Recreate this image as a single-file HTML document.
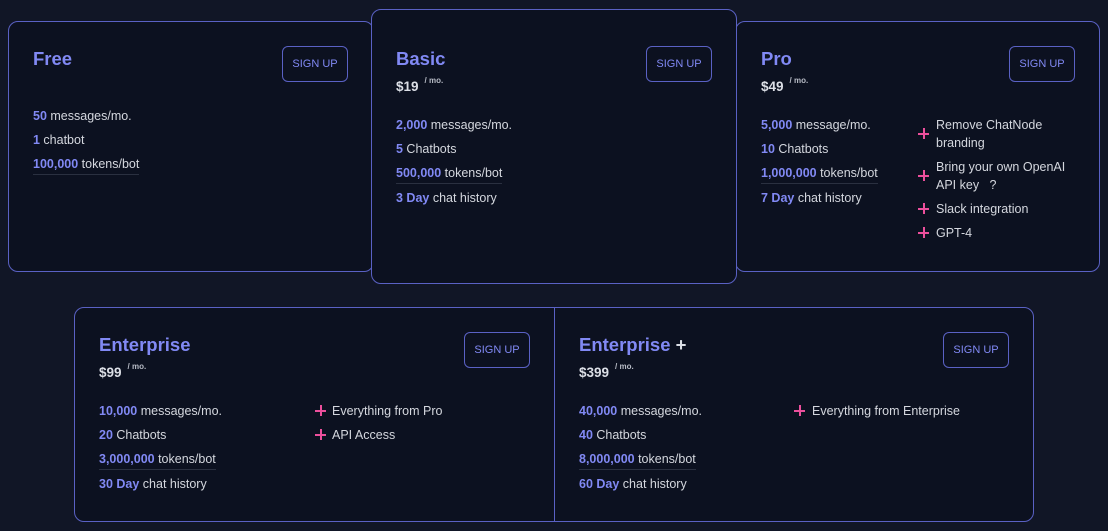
<!DOCTYPE html><html><head><style>
body{margin:0;width:1108px;height:531px;background:#111626;font-family:"Liberation Sans",sans-serif;position:relative;overflow:hidden;color:#d4d7de}
.c{position:absolute;background:#0c1120;border:1px solid #5a61c4;border-radius:10px;box-sizing:border-box}
.a{position:absolute;white-space:nowrap}
.t{font-size:18.5px;font-weight:bold;color:#8189f4;line-height:22px}
.p{font-size:13.5px;font-weight:bold;color:#dcdfe6;line-height:18px}
.p small{font-size:8px;font-weight:bold;color:#b8bcc6;vertical-align:8px;margin-left:6px}
.b{position:absolute;width:66px;height:36px;border:1px solid #5a61c4;border-radius:6px;color:#8189f4;font-size:11px;display:flex;align-items:center;justify-content:center;box-sizing:border-box}
.l{font-size:12.5px;line-height:18px}
.l b{color:#8189f4}
.u{border-bottom:1px solid #2a3040;padding-bottom:1px}
.pl{position:absolute;width:11px;height:11px;margin-top:3px}
.pl:before{content:"";position:absolute;left:0;top:5px;width:11px;height:2px;background:#ec4f9c}
.pl:after{content:"";position:absolute;left:5px;top:0;width:2px;height:11px;background:#ec4f9c}
</style></head><body>
<div class="c" style="left:8px;top:21px;width:366px;height:251px"></div>
<div class="c" style="left:735px;top:21px;width:365px;height:251px"></div>
<div class="c" style="left:371px;top:9px;width:366px;height:275px"></div>
<div class="c" style="left:74px;top:307px;width:960px;height:215px"></div>
<div style="position:absolute;left:554px;top:308px;width:1px;height:213px;background:#5a61c4"></div>

<div class="a t" style="left:33px;top:48px">Free</div>
<div class="b" style="left:282px;top:46px">SIGN UP</div>
<div class="a l" style="left:33px;top:107px"><b>50</b> messages/mo.</div>
<div class="a l" style="left:33px;top:131px"><b>1</b> chatbot</div>
<div class="a l u" style="left:33px;top:155px"><b>100,000</b> tokens/bot</div>

<div class="a t" style="left:396px;top:48px">Basic</div>
<div class="a p" style="left:396px;top:72px">$19<small>/ mo.</small></div>
<div class="b" style="left:646px;top:46px">SIGN UP</div>
<div class="a l" style="left:396px;top:116px"><b>2,000</b> messages/mo.</div>
<div class="a l" style="left:396px;top:140px"><b>5</b> Chatbots</div>
<div class="a l u" style="left:396px;top:164px"><b>500,000</b> tokens/bot</div>
<div class="a l" style="left:396px;top:189px"><b>3 Day</b> chat history</div>

<div class="a t" style="left:761px;top:48px">Pro</div>
<div class="a p" style="left:761px;top:72px">$49<small>/ mo.</small></div>
<div class="b" style="left:1009px;top:46px">SIGN UP</div>
<div class="a l" style="left:761px;top:116px"><b>5,000</b> message/mo.</div>
<div class="a l" style="left:761px;top:140px"><b>10</b> Chatbots</div>
<div class="a l u" style="left:761px;top:164px"><b>1,000,000</b> tokens/bot</div>
<div class="a l" style="left:761px;top:189px"><b>7 Day</b> chat history</div>
<div class="pl" style="left:918px;top:125px"></div><div class="a l" style="left:936px;top:116px">Remove ChatNode<br>branding</div>
<div class="pl" style="left:918px;top:167px"></div><div class="a l" style="left:936px;top:158px">Bring your own OpenAI<br>API key &nbsp; ?</div>
<div class="pl" style="left:918px;top:200px"></div><div class="a l" style="left:936px;top:200px">Slack integration</div>
<div class="pl" style="left:918px;top:224px"></div><div class="a l" style="left:936px;top:224px">GPT-4</div>

<div class="a t" style="left:99px;top:334px">Enterprise</div>
<div class="a p" style="left:99px;top:358px">$99<small>/ mo.</small></div>
<div class="b" style="left:464px;top:332px">SIGN UP</div>
<div class="a l" style="left:99px;top:402px"><b>10,000</b> messages/mo.</div>
<div class="a l" style="left:99px;top:426px"><b>20</b> Chatbots</div>
<div class="a l u" style="left:99px;top:450px"><b>3,000,000</b> tokens/bot</div>
<div class="a l" style="left:99px;top:475px"><b>30 Day</b> chat history</div>
<div class="pl" style="left:315px;top:402px"></div><div class="a l" style="left:332px;top:402px">Everything from Pro</div>
<div class="pl" style="left:315px;top:426px"></div><div class="a l" style="left:332px;top:426px">API Access</div>

<div class="a t" style="left:579px;top:334px">Enterprise <span style="color:#dcdfe6">+</span></div>
<div class="a p" style="left:579px;top:358px">$399<small>/ mo.</small></div>
<div class="b" style="left:943px;top:332px">SIGN UP</div>
<div class="a l" style="left:579px;top:402px"><b>40,000</b> messages/mo.</div>
<div class="a l" style="left:579px;top:426px"><b>40</b> Chatbots</div>
<div class="a l u" style="left:579px;top:450px"><b>8,000,000</b> tokens/bot</div>
<div class="a l" style="left:579px;top:475px"><b>60 Day</b> chat history</div>
<div class="pl" style="left:794px;top:402px"></div><div class="a l" style="left:812px;top:402px">Everything from Enterprise</div>
</body></html>
